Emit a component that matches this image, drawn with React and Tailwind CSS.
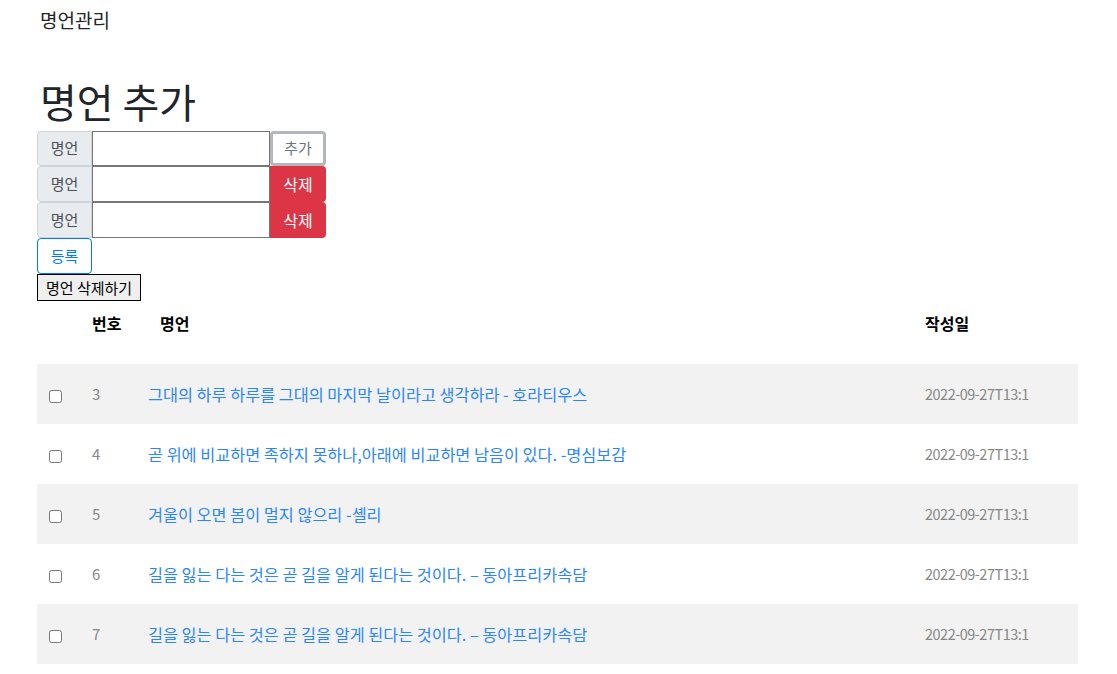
import React from 'react';

const quotes = [
  { id: 3, text: '그대의 하루 하루를 그대의 마지막 날이라고 생각하라 - 호라티우스' },
  { id: 4, text: '곧 위에 비교하면 족하지 못하나,아래에 비교하면 남음이 있다. -명심보감' },
  { id: 5, text: '겨울이 오면 봄이 멀지 않으리 -셸리' },
  { id: 6, text: '길을 잃는 다는 것은 곧 길을 알게 된다는 것이다. – 동아프리카속담' },
  { id: 7, text: '길을 잃는 다는 것은 곧 길을 알게 된다는 것이다. – 동아프리카속담' },
];

const InputRow = ({ first }) => {
  return (
    <div className={`flex ${first ? 'h-[35px]' : 'h-[36px]'}`}>
      <span className="w-[55px] flex items-center justify-center bg-[#e9ecef] border border-[#ced4da] rounded-l-[4px] text-[15px] text-[#495057]">명언</span>
      <input className="w-[178px] h-full border border-[#767676] bg-white outline-none" />
      {first ? (
        <button className="w-[56px] h-full rounded-[4px] border-[3px] border-[#b3b7bb] bg-white text-[15px] text-[#6c757d]">추가</button>
      ) : (
        <button className="w-[56px] h-full rounded-r-[4px] bg-[#dc3545] text-[16px] text-white">삭제</button>
      )}
    </div>
  );
};

const App = () => {
  return (
    <div className="min-h-[674px] bg-white font-['Noto_Sans_CJK_KR','Noto_Sans',sans-serif] text-[#212529]">
      <nav className="h-[40px] pl-[40px] pt-[7px] text-[19px] leading-[26px]">명언관리</nav>
      <div className="ml-[37px] w-[1041px]">
        <h1 className="mt-[31px] h-[60px] pl-[3px] text-[40px] leading-[60px] font-normal text-[#212529]">명언 추가</h1>
        <InputRow first />
        <InputRow />
        <InputRow />
        <button className="w-[55px] h-[36px] border border-[#007bff] rounded-[4px] text-[15px] text-[#007bff] bg-white">등록</button>
        <div>
          <button className="h-[27px] px-[8px] border border-black bg-[#efefef] text-[15px] leading-[25px] text-black">명언 삭제하기</button>
        </div>
        <table className="w-full border-collapse text-[16px]">
          <thead>
            <tr className="h-[63px] align-top">
              <th className="w-[48px]"></th>
              <th className="w-[56px] pt-[10px] pl-[7px] text-left font-bold text-black">번호</th>
              <th className="pt-[10px] pl-[19px] text-left font-bold text-black">명언</th>
              <th className="w-[161px] pt-[10px] pl-[8px] text-left font-bold text-black">작성일</th>
            </tr>
          </thead>
          <tbody>
            {quotes.map((q, idx) => (
              <tr key={q.id} className={`h-[60px] ${idx % 2 === 0 ? 'bg-[#f2f2f2]' : 'bg-white'}`}>
                <td className="pl-[12px]">
                  <input type="checkbox" className="w-[13px] h-[13px] align-middle" />
                </td>
                <td className="pl-[7px] text-[15px] text-[#888]">{q.id}</td>
                <td className="pl-[7px] text-[16.3px] text-[#2a86ff]">{q.text}</td>
                <td className="pl-[8px] text-[14.5px] tracking-[-0.5px] text-[#888] whitespace-nowrap overflow-hidden">2022-09-27T13:1</td>
              </tr>
            ))}
          </tbody>
        </table>
      </div>
    </div>
  );
};

export default App;
